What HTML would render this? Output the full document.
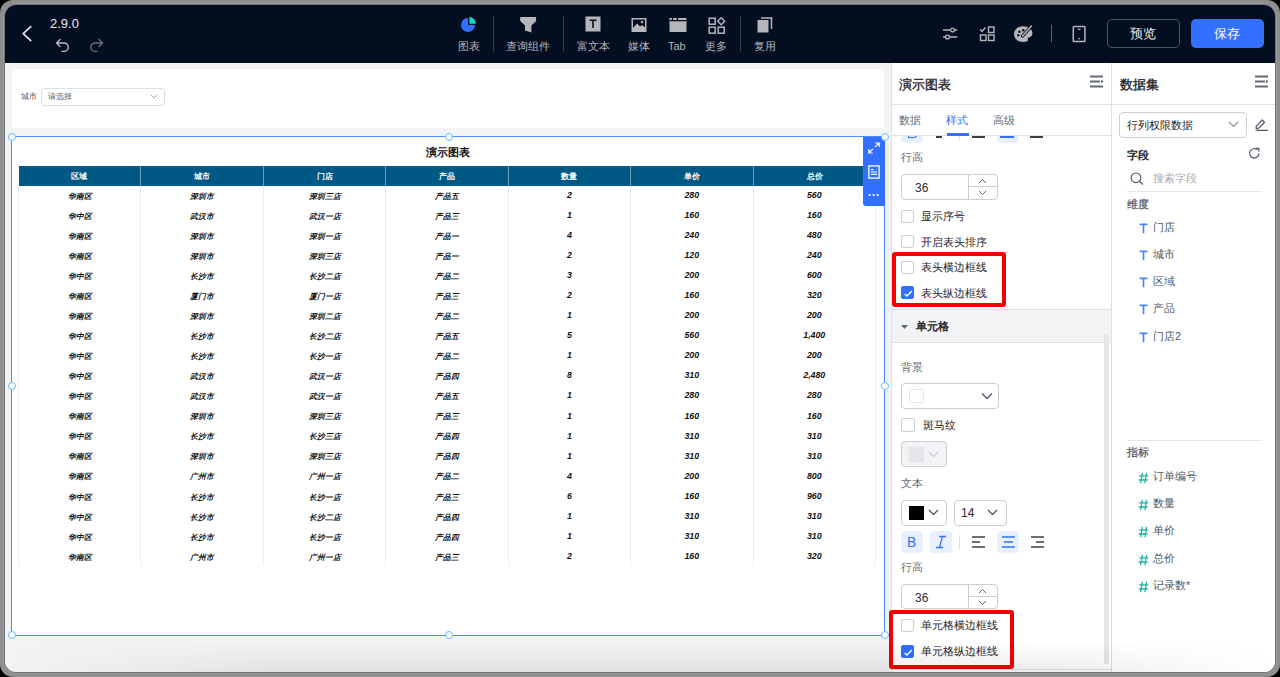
<!DOCTYPE html>
<html><head><meta charset="utf-8">
<style>
*{box-sizing:border-box;margin:0;padding:0}
html,body{width:1280px;height:677px;overflow:hidden;background:#000;font-family:"Liberation Sans",sans-serif}
.a{position:absolute}
#frame{position:absolute;left:0;top:0;width:1280px;height:677px;background:#8e8e8e;border-radius:13px}
#win{position:absolute;left:0;top:0;width:1280px;height:677px;background:#f2f3f5;clip-path:inset(5px 5px 5px 5px round 11px)}
.tb{position:absolute;color:#b4b6ba;font-size:11px;white-space:nowrap;line-height:13px}
.sep{position:absolute;width:1px;background:#333a47}
table.t{position:absolute;left:18px;top:166px;border-collapse:collapse;table-layout:fixed;width:858px}
table.t th{height:20px;background:#005985;color:#fff;font-size:8px;font-weight:bold;border-left:1px solid #6f9bb6;text-align:center;padding:2px 0 0 0;line-height:18px}
table.t th:first-child{border-left:none}
table.t td{height:20px;font-size:8px;font-weight:bold;font-style:italic;color:#111;text-align:center;border-left:1px solid #ededed;border-right:1px solid #ededed;padding:2.5px 0 0 0;line-height:17.5px}
.h{position:absolute;width:8px;height:8px;border-radius:50%;background:#fff;border:1.6px solid #5fc0ff}
.lbl{position:absolute;font-size:11px;color:#646a73;white-space:nowrap;line-height:13px}
.txt{position:absolute;font-size:11px;color:#1f2329;white-space:nowrap;line-height:15px}
.cb{position:absolute;width:13px;height:13px;border:1px solid #c9cdd4;border-radius:2px;background:#fff}
.cbc{background:#3370ff;border-color:#3370ff}
.inp{position:absolute;border:1px solid #c9cdd4;border-radius:4px;background:#fff}
.red{position:absolute;border:4px solid #f50000;border-radius:3px}
.fbtn{position:absolute;width:22px;height:22px;border-radius:4px}
.fsel{background:#e8f0ff}
table.t td span{position:relative;top:var(--o)}
table.t td:nth-child(n+5){font-size:8.8px;padding-top:1px}
table.t td:nth-child(-n+4){font-size:7.7px}
</style></head><body>
<div id="frame"></div>
<div class="a" style="left:3px;top:3px;width:1274px;height:671px;border:1px solid #9c9c9c;border-radius:13px"></div>
<div class="a" style="left:4px;top:4px;width:1272px;height:669px;border:1px solid #727272;border-radius:12px"></div>
<div id="win">
<!-- HEADER -->
<div class="a" style="left:0;top:0;width:1280px;height:63px;background:#040e21"></div>
<svg class="a" style="left:20px;top:24px" width="16" height="20" viewBox="0 0 16 20"><path d="M10.8 2.6 L3.2 9.6 L10.8 16.6" fill="none" stroke="#e8eaed" stroke-width="1.6" stroke-linecap="round" stroke-linejoin="round"/></svg>
<div class="a" style="left:50px;top:15.6px;color:#e8eaed;font-size:13px;line-height:15px">2.9.0</div>
<svg class="a" style="left:54px;top:37px" width="17" height="17" viewBox="0 0 17 17"><path d="M6 2.5 L2.5 6 L6 9.5 M2.5 6 H10 A4.2 4.2 0 0 1 10 14.4 H8" fill="none" stroke="#b9bcc1" stroke-width="1.4" stroke-linecap="round" stroke-linejoin="round"/></svg>
<svg class="a" style="left:88px;top:37px" width="17" height="17" viewBox="0 0 17 17"><path d="M11 2.5 L14.5 6 L11 9.5 M14.5 6 H7 A4.2 4.2 0 0 0 7 14.4 H9" fill="none" stroke="#6a6e75" stroke-width="1.4" stroke-linecap="round" stroke-linejoin="round"/></svg>

<!-- toolbar -->
<svg class="a" style="left:460px;top:16px" width="17" height="17" viewBox="0 0 17 17"><path d="M8 2 A7 7 0 1 0 15 9 H8 Z" fill="#3370ff"/><path d="M9.3 1 A7 7 0 0 1 16 7.7 H9.3 Z" fill="#10dcb9"/></svg>
<div class="tb" style="left:458px;top:40px">图表</div>
<div class="sep" style="left:493px;top:16px;height:36px"></div>
<svg class="a" style="left:519px;top:16px" width="18" height="18" viewBox="0 0 18 18"><path d="M1.2 1 H17.1 V5 L12.4 9.5 V16.6 L6 14.5 V9.5 L1.2 5 Z" fill="#b4b6ba"/></svg>
<div class="tb" style="left:506px;top:40px">查询组件</div>
<div class="sep" style="left:563px;top:16px;height:36px"></div>
<svg class="a" style="left:585px;top:16px" width="16" height="16" viewBox="0 0 16 16"><rect x="0.5" y="0.5" width="15" height="15" fill="#b4b6ba"/><path d="M4.5 4.3 H11.5 M8 4.3 V12" stroke="#060e1f" stroke-width="1.6"/></svg>
<div class="tb" style="left:577px;top:40px">富文本</div>
<svg class="a" style="left:631px;top:16.5px" width="16" height="16" viewBox="0 0 16 16"><rect x="0.5" y="1" width="15" height="14" fill="#b4b6ba"/><rect x="2" y="2.5" width="12" height="8" fill="#060e1f"/><path d="M2 11 L6 6.5 L9 9.5 L11 8 L14 10.5 V11 Z" fill="#b4b6ba"/><circle cx="11" cy="5" r="1.2" fill="#b4b6ba"/></svg>
<div class="tb" style="left:628px;top:40px">媒体</div>
<svg class="a" style="left:669px;top:16.5px" width="18" height="16" viewBox="0 0 18 16"><path d="M0.5 1 H17.5 V15 H0.5 Z" fill="#b4b6ba"/><path d="M3.5 1 V3.5 M8.5 1 V3.5 M0.5 3.7 H17.5" stroke="#060e1f" stroke-width="1.3"/></svg>
<div class="tb" style="left:668px;top:40px">Tab</div>
<svg class="a" style="left:708px;top:16.5px" width="18" height="18" viewBox="0 0 18 18"><rect x="1.2" y="1.2" width="6" height="6" fill="none" stroke="#b4b6ba" stroke-width="1.5"/><rect x="1.2" y="10.2" width="6" height="6" fill="none" stroke="#b4b6ba" stroke-width="1.5"/><rect x="10.2" y="10.2" width="6" height="6" fill="none" stroke="#b4b6ba" stroke-width="1.5"/><path d="M13.2 0.8 L16.7 4.3 L13.2 7.8 L9.7 4.3 Z" fill="none" stroke="#b4b6ba" stroke-width="1.4"/></svg>
<div class="tb" style="left:705px;top:40px">更多</div>
<div class="sep" style="left:740px;top:16px;height:36px"></div>
<svg class="a" style="left:757px;top:16.5px" width="16" height="16" viewBox="0 0 16 16"><rect x="0.5" y="3" width="11" height="12.5" fill="#b4b6ba"/><path d="M4 1 H14.5 V12" fill="none" stroke="#b4b6ba" stroke-width="1.5"/></svg>
<div class="tb" style="left:754px;top:40px">复用</div>

<!-- right header icons -->
<svg class="a" style="left:942px;top:26px" width="17" height="14" viewBox="0 0 17 14"><path d="M1 4 H15.3 M1 11 H15.3" stroke="#b4b6ba" stroke-width="1.3"/><circle cx="10.5" cy="4" r="1.9" fill="#060e1f" stroke="#b4b6ba" stroke-width="1.3"/><circle cx="5.5" cy="11" r="1.9" fill="#060e1f" stroke="#b4b6ba" stroke-width="1.3"/></svg>
<svg class="a" style="left:978.5px;top:26.2px" width="17" height="16" viewBox="0 0 17 16"><path d="M1 3.5 L3 5.5 L6.5 1.5" fill="none" stroke="#b4b6ba" stroke-width="1.4"/><rect x="9.5" y="1" width="5.5" height="5.5" fill="none" stroke="#b4b6ba" stroke-width="1.4"/><rect x="1.5" y="9" width="5.5" height="5.5" fill="none" stroke="#b4b6ba" stroke-width="1.4"/><rect x="9.5" y="9" width="5.5" height="5.5" fill="none" stroke="#b4b6ba" stroke-width="1.4"/></svg>
<svg class="a" style="left:1012px;top:24px" width="22" height="20" viewBox="0 0 22 20"><path d="M2 10 C2 5.3 6 2.3 11.2 2.3 C16.4 2.3 20.4 5.2 20.4 9.3 C20.4 11.8 19.2 12.9 17.6 13.2 C16.1 13.5 15.6 14.2 15.9 15.6 C16.2 17.3 14.2 17.9 11.2 17.9 C6 17.9 2 14.8 2 10 Z" fill="#b4b6ba"/><circle cx="7.4" cy="7.8" r="1.2" fill="#060e1f"/><circle cx="11.2" cy="6.3" r="1.2" fill="#060e1f"/><circle cx="6.3" cy="11.3" r="1.2" fill="#060e1f"/><path d="M19.4 2 L10.6 12" stroke="#060e1f" stroke-width="3.4" stroke-linecap="round"/><path d="M19.4 2 L10.6 12" stroke="#b4b6ba" stroke-width="1.6" stroke-linecap="round"/></svg>
<div class="sep" style="left:1051px;top:25px;height:17px;background:#5b606a"></div>
<svg class="a" style="left:1072px;top:25px" width="14" height="18" viewBox="0 0 14 18"><rect x="1.3" y="1.5" width="11.6" height="15" rx="0.8" fill="none" stroke="#b4b6ba" stroke-width="1.5"/><path d="M5.8 4.3 H8.4 M6.3 13.7 H7.9" stroke="#b4b6ba" stroke-width="1.2"/></svg>
<div class="a" style="left:1106.5px;top:19.3px;width:73px;height:29px;border:1.2px solid #4f5562;border-radius:5px;color:#e8eaed;font-size:12.5px;text-align:center;line-height:28.4px">预览</div>
<div class="a" style="left:1190.5px;top:19.3px;width:73px;height:29px;background:#3370ff;border-radius:5px;color:#fff;font-size:12.5px;text-align:center;line-height:30.6px">保存</div>

<!-- CANVAS -->
<div class="a" style="left:12px;top:69px;width:872px;height:59px;background:#fff"></div>
<div class="a" style="left:21px;top:92.2px;font-size:8px;color:#4e5969;line-height:10px">城市</div>
<div class="a" style="left:40.5px;top:87.7px;width:124.7px;height:18px;border:1px solid #dcdfe4;border-radius:3px;background:#fff"></div>
<div class="a" style="left:48px;top:92.2px;font-size:7.7px;color:#4e5969;line-height:10px">请选择</div>
<svg class="a" style="left:150px;top:93.8px" width="8" height="6" viewBox="0 0 8 6"><path d="M1 1 L4 4 L7 1" fill="none" stroke="#9aa0a8" stroke-width="0.9"/></svg>

<div class="a" style="left:11px;top:136px;width:874px;height:500px;background:#fff;border:1px solid #4d8cff"></div>
<div class="a" style="left:426px;top:145px;font-size:11px;font-weight:bold;color:#111;line-height:14px">演示图表</div>
<table class="t">
<colgroup><col><col><col><col><col><col><col></colgroup>
<tr><th>区域</th><th>城市</th><th>门店</th><th>产品</th><th>数量</th><th>单价</th><th>总价</th></tr>
<tr style="--o:-1.00px"><td><span>华南区</span></td><td><span>深圳市</span></td><td><span>深圳三店</span></td><td><span>产品五</span></td><td><span>2</span></td><td><span>280</span></td><td><span>560</span></td></tr>
<tr style="--o:-0.93px"><td><span>华中区</span></td><td><span>武汉市</span></td><td><span>武汉一店</span></td><td><span>产品三</span></td><td><span>1</span></td><td><span>160</span></td><td><span>160</span></td></tr>
<tr style="--o:-0.86px"><td><span>华南区</span></td><td><span>深圳市</span></td><td><span>深圳一店</span></td><td><span>产品一</span></td><td><span>4</span></td><td><span>240</span></td><td><span>480</span></td></tr>
<tr style="--o:-0.79px"><td><span>华南区</span></td><td><span>深圳市</span></td><td><span>深圳三店</span></td><td><span>产品一</span></td><td><span>2</span></td><td><span>120</span></td><td><span>240</span></td></tr>
<tr style="--o:-0.72px"><td><span>华中区</span></td><td><span>长沙市</span></td><td><span>长沙二店</span></td><td><span>产品二</span></td><td><span>3</span></td><td><span>200</span></td><td><span>600</span></td></tr>
<tr style="--o:-0.65px"><td><span>华南区</span></td><td><span>厦门市</span></td><td><span>厦门一店</span></td><td><span>产品三</span></td><td><span>2</span></td><td><span>160</span></td><td><span>320</span></td></tr>
<tr style="--o:-0.58px"><td><span>华南区</span></td><td><span>深圳市</span></td><td><span>深圳二店</span></td><td><span>产品二</span></td><td><span>1</span></td><td><span>200</span></td><td><span>200</span></td></tr>
<tr style="--o:-0.51px"><td><span>华中区</span></td><td><span>长沙市</span></td><td><span>长沙二店</span></td><td><span>产品五</span></td><td><span>5</span></td><td><span>560</span></td><td><span>1,400</span></td></tr>
<tr style="--o:-0.44px"><td><span>华中区</span></td><td><span>长沙市</span></td><td><span>长沙一店</span></td><td><span>产品二</span></td><td><span>1</span></td><td><span>200</span></td><td><span>200</span></td></tr>
<tr style="--o:-0.37px"><td><span>华中区</span></td><td><span>武汉市</span></td><td><span>武汉一店</span></td><td><span>产品四</span></td><td><span>8</span></td><td><span>310</span></td><td><span>2,480</span></td></tr>
<tr style="--o:-0.30px"><td><span>华中区</span></td><td><span>武汉市</span></td><td><span>武汉一店</span></td><td><span>产品五</span></td><td><span>1</span></td><td><span>280</span></td><td><span>280</span></td></tr>
<tr style="--o:-0.23px"><td><span>华南区</span></td><td><span>深圳市</span></td><td><span>深圳三店</span></td><td><span>产品三</span></td><td><span>1</span></td><td><span>160</span></td><td><span>160</span></td></tr>
<tr style="--o:-0.16px"><td><span>华中区</span></td><td><span>长沙市</span></td><td><span>长沙三店</span></td><td><span>产品四</span></td><td><span>1</span></td><td><span>310</span></td><td><span>310</span></td></tr>
<tr style="--o:-0.09px"><td><span>华南区</span></td><td><span>深圳市</span></td><td><span>深圳三店</span></td><td><span>产品四</span></td><td><span>1</span></td><td><span>310</span></td><td><span>310</span></td></tr>
<tr style="--o:-0.02px"><td><span>华南区</span></td><td><span>广州市</span></td><td><span>广州一店</span></td><td><span>产品二</span></td><td><span>4</span></td><td><span>200</span></td><td><span>800</span></td></tr>
<tr style="--o:0.05px"><td><span>华中区</span></td><td><span>长沙市</span></td><td><span>长沙一店</span></td><td><span>产品三</span></td><td><span>6</span></td><td><span>160</span></td><td><span>960</span></td></tr>
<tr style="--o:0.12px"><td><span>华中区</span></td><td><span>长沙市</span></td><td><span>长沙二店</span></td><td><span>产品四</span></td><td><span>1</span></td><td><span>310</span></td><td><span>310</span></td></tr>
<tr style="--o:0.19px"><td><span>华中区</span></td><td><span>长沙市</span></td><td><span>长沙一店</span></td><td><span>产品四</span></td><td><span>1</span></td><td><span>310</span></td><td><span>310</span></td></tr>
<tr style="--o:0.26px"><td><span>华南区</span></td><td><span>广州市</span></td><td><span>广州一店</span></td><td><span>产品三</span></td><td><span>2</span></td><td><span>160</span></td><td><span>320</span></td></tr>
</table>
<!-- widget toolbar -->
<div class="a" style="left:863px;top:137px;width:22px;height:69px;background:#3370ff;border-radius:0 0 1px 3px"></div>
<svg class="a" style="left:867.5px;top:142px" width="12" height="12" viewBox="0 0 12 12"><path d="M7.3 1 H11.2 V4.9 M11.2 1 L7 5.2 M4.7 11 H0.8 V7.1 M0.8 11 L5 6.8" fill="none" stroke="#fff" stroke-width="1.2"/></svg>
<svg class="a" style="left:867.5px;top:164.5px" width="12" height="14" viewBox="0 0 12 14"><rect x="0.9" y="0.9" width="10.2" height="12.2" fill="none" stroke="#fff" stroke-width="1.3"/><path d="M3 4.6 H5.6 M3 7 H9 M3 9.4 H9" stroke="#fff" stroke-width="1.1"/></svg>
<svg class="a" style="left:867.5px;top:193.2px" width="12" height="4" viewBox="0 0 12 4"><circle cx="1.6" cy="2" r="1.1" fill="#fff"/><circle cx="5.6" cy="2" r="1.1" fill="#fff"/><circle cx="9.6" cy="2" r="1.1" fill="#fff"/></svg>
<!-- handles -->
<div class="h" style="left:8px;top:132.5px"></div>
<div class="h" style="left:445px;top:132.5px"></div>
<div class="h" style="left:881px;top:132.5px"></div>
<div class="h" style="left:8px;top:381.5px"></div>
<div class="h" style="left:881px;top:381.5px"></div>
<div class="h" style="left:8px;top:631px"></div>
<div class="h" style="left:445px;top:631px"></div>
<div class="h" style="left:881px;top:631px"></div>

<!-- PANEL 1 -->
<div class="a" style="left:891px;top:63px;width:221px;height:614px;background:#fff;border-left:1px solid #dee0e3;border-right:1px solid #dee0e3"></div>
<div class="a" style="left:899px;top:77px;font-size:12.6px;font-weight:400;-webkit-text-stroke:0.35px #1f2329;color:#1f2329;line-height:16px">演示图表</div>
<svg class="a" style="left:1089px;top:75px" width="16" height="13" viewBox="0 0 16 13"><path d="M1 1.5 H14 M1 6.5 H11 M1 11.5 H14" stroke="#646a73" stroke-width="1.8"/><path d="M12 4.5 L14.5 6.5 L12 8.5 Z" fill="#646a73"/></svg>
<div class="a" style="left:892px;top:104px;width:219px;height:1px;background:#dee0e3"></div>

<!-- scrolled content -->
<div class="fbtn fsel" style="left:901px;top:121px"></div>
<div class="fbtn fsel" style="left:997px;top:121px"></div>
<div class="a" style="left:892px;top:105px;width:219px;height:30px;background:#fff"></div>
<div class="a" style="left:908px;top:135px;width:9px;height:3px;border:1.5px solid #3370ff;border-top:none;border-radius:0 0 3px 0"></div>
<div class="a" style="left:936px;top:136px;width:6px;height:2px;background:#3b4049"></div>
<div class="a" style="left:959px;top:136px;width:1px;height:4px;background:#dee0e3"></div>
<div class="a" style="left:972px;top:136px;width:13px;height:2px;background:#3b4049"></div>
<div class="a" style="left:1000px;top:136px;width:14px;height:2px;background:#3370ff"></div>
<div class="a" style="left:1030px;top:136px;width:13px;height:2px;background:#3b4049"></div>
<div class="a" style="left:899px;top:113px;font-size:11px;color:#646a73;line-height:14px">数据</div>
<div class="a" style="left:946px;top:113px;font-size:11px;color:#3370ff;line-height:14px">样式</div>
<div class="a" style="left:993px;top:113px;font-size:11px;color:#646a73;line-height:14px">高级</div>
<div class="a" style="left:892px;top:135px;width:219px;height:1px;background:#dee0e3"></div>
<div class="a" style="left:946.5px;top:133px;width:22px;height:2.7px;background:#3370ff"></div>

<div class="lbl" style="left:901px;top:151px">行高</div>
<div class="inp" style="left:901px;top:174px;width:97px;height:26px"></div>
<div class="a" style="left:967.5px;top:175px;width:1.2px;height:24px;background:#c9cdd4"></div>
<div class="a" style="left:969px;top:186px;width:28px;height:1px;background:#c9cdd4"></div>
<div class="a" style="left:915px;top:181.2px;font-size:12px;color:#2b3038;line-height:14px">36</div>
<svg class="a" style="left:978px;top:178px" width="9" height="6" viewBox="0 0 9 6"><path d="M1 5 L4.5 1.5 L8 5" fill="none" stroke="#646a73" stroke-width="1"/></svg>
<svg class="a" style="left:978px;top:190px" width="9" height="6" viewBox="0 0 9 6"><path d="M1 1 L4.5 4.5 L8 1" fill="none" stroke="#646a73" stroke-width="1"/></svg>

<div class="cb" style="left:901px;top:210px"></div><div class="txt" style="left:921px;top:209px">显示序号</div>
<div class="cb" style="left:901px;top:235px"></div><div class="txt" style="left:921px;top:235px">开启表头排序</div>
<div class="cb" style="left:901px;top:261px"></div><div class="txt" style="left:921px;top:260px">表头横边框线</div>
<div class="cb cbc" style="left:901px;top:286px"><svg class="a" style="left:1px;top:1px" width="11" height="11" viewBox="0 0 11 11"><path d="M1.6 5.9 L3.9 8 L8.9 3.1" fill="none" stroke="#fff" stroke-width="1.4"/></svg></div><div class="txt" style="left:921px;top:286px">表头纵边框线</div>
<div class="red" style="left:892px;top:252px;width:114px;height:55px"></div>

<!-- section 单元格 -->
<div class="a" style="left:892px;top:309px;width:219px;height:34px;background:#f2f3f5;border-top:1px solid #dee0e3;border-bottom:1px solid #dee0e3"></div>
<svg class="a" style="left:900px;top:324px" width="9" height="6" viewBox="0 0 9 6"><path d="M1 1 H8 L4.5 5 Z" fill="#646a73"/></svg>
<div class="a" style="left:916px;top:319px;font-size:11px;-webkit-text-stroke:0.45px #1f2329;color:#1f2329;line-height:14px">单元格</div>
<div class="a" style="left:1104px;top:334px;width:5px;height:330px;background:#e5e6e8;border-radius:3px"></div>

<div class="lbl" style="left:901px;top:360.8px">背景</div>
<div class="inp" style="left:901px;top:383px;width:98px;height:26px"></div>
<div class="a" style="left:909px;top:389px;width:15px;height:14px;border:1px solid #e5e6eb;border-radius:2px"></div>
<svg class="a" style="left:981px;top:392px" width="12" height="8" viewBox="0 0 12 8"><path d="M1 1.5 L6 6.5 L11 1.5" fill="none" stroke="#4e5969" stroke-width="1.3"/></svg>

<div class="cb" style="left:901px;top:418px;width:14px;height:14px"></div><div class="txt" style="left:923px;top:417.5px">斑马纹</div>
<div class="a" style="left:901px;top:441px;width:46px;height:26px;border:1px solid #c9cdd4;border-radius:4px;background:#f2f3f5"></div>
<div class="a" style="left:909px;top:447px;width:15px;height:15px;background:#e5e6eb"></div>
<svg class="a" style="left:928px;top:451px" width="11" height="7" viewBox="0 0 11 7"><path d="M1 1 L5.5 5.5 L10 1" fill="none" stroke="#c9cdd4" stroke-width="1.2"/></svg>

<div class="lbl" style="left:901px;top:477px">文本</div>
<div class="inp" style="left:901px;top:500px;width:46px;height:26px"></div>
<div class="a" style="left:909px;top:506px;width:15px;height:14px;background:#000"></div>
<svg class="a" style="left:928px;top:509px" width="11" height="7" viewBox="0 0 11 7"><path d="M1 1 L5.5 5.5 L10 1" fill="none" stroke="#4e5969" stroke-width="1.3"/></svg>
<div class="inp" style="left:954px;top:500px;width:53px;height:26px"></div>
<div class="a" style="left:961px;top:506px;font-size:12px;color:#1f2329;line-height:14px">14</div>
<svg class="a" style="left:987px;top:509px" width="11" height="7" viewBox="0 0 11 7"><path d="M1 1 L5.5 5.5 L10 1" fill="none" stroke="#4e5969" stroke-width="1.3"/></svg>

<div class="fbtn fsel" style="left:901px;top:531px"></div>
<div class="a" style="left:907px;top:534px;font-size:14px;color:#3370ff;line-height:16px">B</div>
<div class="fbtn fsel" style="left:930px;top:531px"></div>
<svg class="a" style="left:934px;top:535px" width="14" height="14" viewBox="0 0 14 14"><path d="M5 1.5 H12 M2 12.5 H9 M8.5 1.5 L5.5 12.5" fill="none" stroke="#3370ff" stroke-width="1.3"/></svg>
<div class="a" style="left:959px;top:535px;width:1px;height:15px;background:#dee0e3"></div>
<svg class="a" style="left:971px;top:535px" width="15" height="14" viewBox="0 0 15 14"><path d="M1 2 H14 M1 7 H9 M1 12 H14" stroke="#3b4049" stroke-width="1.3"/></svg>
<div class="fbtn fsel" style="left:997px;top:531px"></div>
<svg class="a" style="left:1001px;top:535px" width="15" height="14" viewBox="0 0 15 14"><path d="M1 2 H14 M3 7 H12 M1 12 H14" stroke="#3370ff" stroke-width="1.3"/></svg>
<svg class="a" style="left:1030px;top:535px" width="15" height="14" viewBox="0 0 15 14"><path d="M1 2 H14 M6 7 H14 M1 12 H14" stroke="#3b4049" stroke-width="1.3"/></svg>

<div class="lbl" style="left:901px;top:561px">行高</div>
<div class="inp" style="left:901px;top:584px;width:97px;height:25px"></div>
<div class="a" style="left:968px;top:585px;width:1px;height:23px;background:#c9cdd4"></div>
<div class="a" style="left:969px;top:596px;width:28px;height:1px;background:#c9cdd4"></div>
<div class="a" style="left:915px;top:590.5px;font-size:12px;color:#2b3038;line-height:14px">36</div>
<svg class="a" style="left:978px;top:588px" width="9" height="6" viewBox="0 0 9 6"><path d="M1 5 L4.5 1.5 L8 5" fill="none" stroke="#646a73" stroke-width="1"/></svg>
<svg class="a" style="left:978px;top:600px" width="9" height="6" viewBox="0 0 9 6"><path d="M1 1 L4.5 4.5 L8 1" fill="none" stroke="#646a73" stroke-width="1"/></svg>

<div class="cb" style="left:901px;top:619px"></div><div class="txt" style="left:921px;top:618.4px">单元格横边框线</div>
<div class="cb cbc" style="left:901px;top:645px"><svg class="a" style="left:1px;top:1px" width="11" height="11" viewBox="0 0 11 11"><path d="M1.6 5.9 L3.9 8 L8.9 3.1" fill="none" stroke="#fff" stroke-width="1.4"/></svg></div><div class="txt" style="left:921px;top:644.4px">单元格纵边框线</div>
<div class="red" style="left:889px;top:610px;width:125px;height:59px"></div>

<!-- PANEL 2 -->
<div class="a" style="left:1112px;top:63px;width:168px;height:614px;background:#fff"></div>
<div class="a" style="left:1120px;top:77px;font-size:12.6px;font-weight:400;-webkit-text-stroke:0.35px #1f2329;color:#1f2329;line-height:16px">数据集</div>
<svg class="a" style="left:1254px;top:75px" width="16" height="13" viewBox="0 0 16 13"><path d="M1 1.5 H14 M1 6.5 H11 M1 11.5 H14" stroke="#646a73" stroke-width="1.8"/><path d="M12 4.5 L14.5 6.5 L12 8.5 Z" fill="#646a73"/></svg>
<div class="a" style="left:1112px;top:104px;width:168px;height:1px;background:#dee0e3"></div>
<div class="inp" style="left:1119px;top:112px;width:128px;height:26px"></div>
<div class="a" style="left:1127px;top:117.5px;font-size:11px;color:#1f2329;line-height:14px">行列权限数据</div>
<svg class="a" style="left:1228px;top:121px" width="11" height="7" viewBox="0 0 11 7"><path d="M1 1 L5.5 5.5 L10 1" fill="none" stroke="#86909c" stroke-width="1.1"/></svg>
<svg class="a" style="left:1254px;top:118px" width="15" height="14" viewBox="0 0 15 14"><path d="M2.2 8.2 L8.3 2 L10.6 4.3 L4.4 10.4 H2.2 Z" fill="none" stroke="#4e5969" stroke-width="1.2" stroke-linejoin="round"/><path d="M1.6 12.4 H14" stroke="#4e5969" stroke-width="1.2"/></svg>
<div class="a" style="left:1127px;top:148px;font-size:11px;font-weight:bold;color:#1f2329;line-height:14px">字段</div>
<svg class="a" style="left:1248px;top:147px" width="13" height="13" viewBox="0 0 13 13"><path d="M11 6.5 A4.7 4.7 0 1 1 9.3 2.7" fill="none" stroke="#4e5969" stroke-width="1.2"/><path d="M8 1.2 L11 1.5 L10.6 4.5" fill="none" stroke="#4e5969" stroke-width="1.2"/></svg>
<svg class="a" style="left:1130px;top:172px" width="15" height="13" viewBox="0 0 15 13"><circle cx="6" cy="5.8" r="4.8" fill="none" stroke="#4e5969" stroke-width="1.2"/><path d="M9.5 9.3 L12.8 12.5" stroke="#4e5969" stroke-width="1.2"/></svg>
<div class="a" style="left:1153px;top:171px;font-size:11px;color:#a8abb2;line-height:14px">搜索字段</div>
<div class="a" style="left:1127px;top:191px;width:135px;height:1px;background:#e5e6eb"></div>
<div class="a" style="left:1127px;top:197px;font-size:11px;color:#4e5969;line-height:14px;-webkit-text-stroke:0.25px #4e5969">维度</div>
<svg class="a" style="left:1139px;top:222.8px" width="9" height="11" viewBox="0 0 9 11"><path d="M0.6 1.3 H8.4 M4.5 1.3 V10.2" stroke="#4b83ff" stroke-width="1.7"/></svg>
<div class="a" style="left:1153px;top:219.8px;font-size:11px;color:#4e5969;line-height:14px">门店</div>
<svg class="a" style="left:1139px;top:250.0px" width="9" height="11" viewBox="0 0 9 11"><path d="M0.6 1.3 H8.4 M4.5 1.3 V10.2" stroke="#4b83ff" stroke-width="1.7"/></svg>
<div class="a" style="left:1153px;top:247.0px;font-size:11px;color:#4e5969;line-height:14px">城市</div>
<svg class="a" style="left:1139px;top:277.2px" width="9" height="11" viewBox="0 0 9 11"><path d="M0.6 1.3 H8.4 M4.5 1.3 V10.2" stroke="#4b83ff" stroke-width="1.7"/></svg>
<div class="a" style="left:1153px;top:274.2px;font-size:11px;color:#4e5969;line-height:14px">区域</div>
<svg class="a" style="left:1139px;top:304.4px" width="9" height="11" viewBox="0 0 9 11"><path d="M0.6 1.3 H8.4 M4.5 1.3 V10.2" stroke="#4b83ff" stroke-width="1.7"/></svg>
<div class="a" style="left:1153px;top:301.4px;font-size:11px;color:#4e5969;line-height:14px">产品</div>
<svg class="a" style="left:1139px;top:331.6px" width="9" height="11" viewBox="0 0 9 11"><path d="M0.6 1.3 H8.4 M4.5 1.3 V10.2" stroke="#4b83ff" stroke-width="1.7"/></svg>
<div class="a" style="left:1153px;top:328.6px;font-size:11px;color:#4e5969;line-height:14px">门店2</div>
<div class="a" style="left:1127px;top:440px;width:135px;height:1px;background:#e5e6eb"></div>
<div class="a" style="left:1127px;top:445.3px;font-size:11px;color:#4e5969;line-height:14px;-webkit-text-stroke:0.25px #4e5969">指标</div>
<svg class="a" style="left:1137.5px;top:471.6px" width="11" height="12" viewBox="0 0 11 12"><path d="M4.3 0.8 L2.6 11.2 M8.6 0.8 L6.9 11.2 M1.2 3.9 H10.2 M0.7 8 H9.7" stroke="#1fb5a0" stroke-width="1.3"/></svg>
<div class="a" style="left:1153px;top:468.8px;font-size:11px;color:#4e5969;line-height:14px">订单编号</div>
<svg class="a" style="left:1137.5px;top:498.9px" width="11" height="12" viewBox="0 0 11 12"><path d="M4.3 0.8 L2.6 11.2 M8.6 0.8 L6.9 11.2 M1.2 3.9 H10.2 M0.7 8 H9.7" stroke="#1fb5a0" stroke-width="1.3"/></svg>
<div class="a" style="left:1153px;top:496.1px;font-size:11px;color:#4e5969;line-height:14px">数量</div>
<svg class="a" style="left:1137.5px;top:526.2px" width="11" height="12" viewBox="0 0 11 12"><path d="M4.3 0.8 L2.6 11.2 M8.6 0.8 L6.9 11.2 M1.2 3.9 H10.2 M0.7 8 H9.7" stroke="#1fb5a0" stroke-width="1.3"/></svg>
<div class="a" style="left:1153px;top:523.4px;font-size:11px;color:#4e5969;line-height:14px">单价</div>
<svg class="a" style="left:1137.5px;top:553.5px" width="11" height="12" viewBox="0 0 11 12"><path d="M4.3 0.8 L2.6 11.2 M8.6 0.8 L6.9 11.2 M1.2 3.9 H10.2 M0.7 8 H9.7" stroke="#1fb5a0" stroke-width="1.3"/></svg>
<div class="a" style="left:1153px;top:550.7px;font-size:11px;color:#4e5969;line-height:14px">总价</div>
<svg class="a" style="left:1137.5px;top:580.8px" width="11" height="12" viewBox="0 0 11 12"><path d="M4.3 0.8 L2.6 11.2 M8.6 0.8 L6.9 11.2 M1.2 3.9 H10.2 M0.7 8 H9.7" stroke="#1fb5a0" stroke-width="1.3"/></svg>
<div class="a" style="left:1153px;top:578.0px;font-size:11px;color:#4e5969;line-height:14px">记录数*</div>
<div class="a" style="left:892px;top:669px;width:219px;height:1px;background:#dee0e3"></div>
<div class="a" style="left:5px;top:641px;width:1270px;height:31px;background:linear-gradient(to bottom,rgba(0,0,0,0),rgba(0,0,0,0.075));-webkit-mask-image:linear-gradient(to right,transparent 0,#000 300px,#000 1050px,transparent 1270px)"></div>
</div>
</body></html>
